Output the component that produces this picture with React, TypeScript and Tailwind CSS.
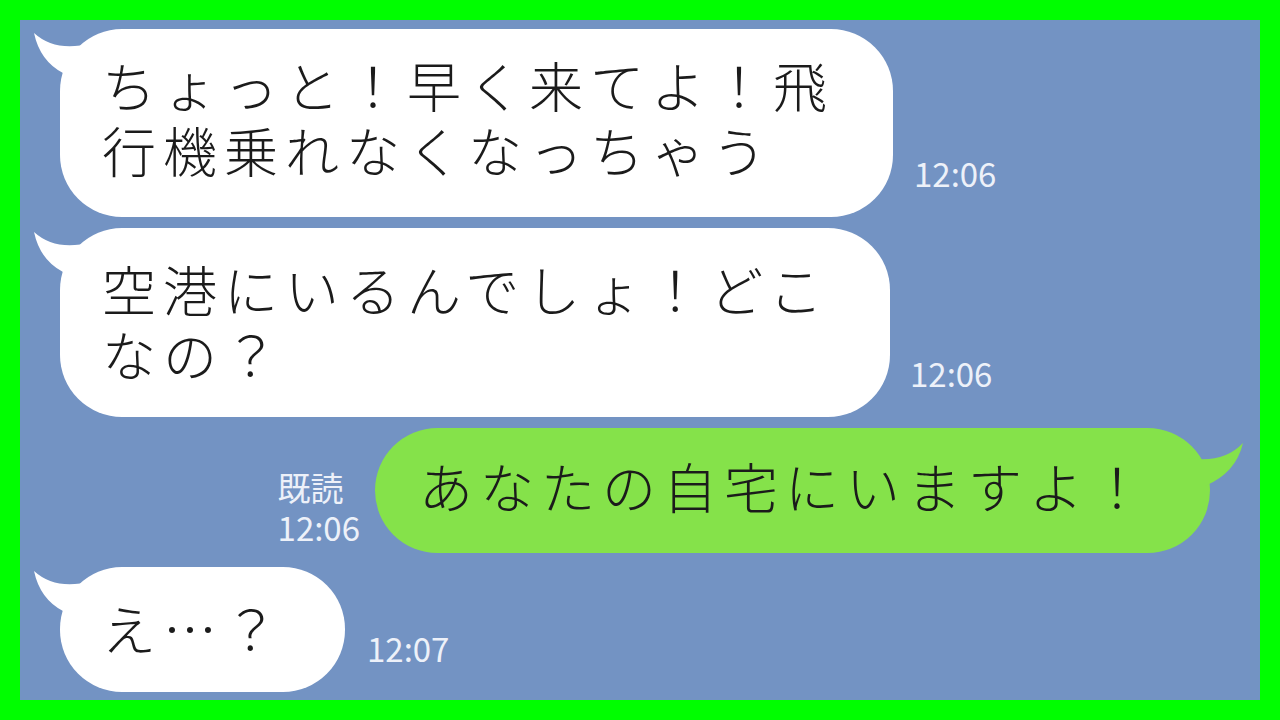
const font = "font-['Noto_Sans_CJK_JP','Noto_Sans',sans-serif]";

const LeftTail = () => (
  <svg
    className="absolute left-[-28px] top-0 h-[50px] w-[70px]"
    viewBox="-28 0 70 50"
    fill="#ffffff"
  >
    <path d="M -26 4 Q -4 24 32 14 L 32 50 L 3 50 L 3 44 Q -20 32 -26 4 Z" />
  </svg>
);

const RightTail = () => (
  <svg
    className="absolute right-[-38px] top-0 h-[70px] w-[80px]"
    viewBox="-40 0 80 70"
    fill="#85e24a"
  >
    <path d="M 35 15 Q 15 36 -20 30 L -20 70 L -3 70 L -3 58 Q 28 45 35 15 Z" />
  </svg>
);

type LeftMsgProps = {
  lines: string[];
  time: string;
  width: string;
  height: string;
  padTop: string;
  timeGap: string;
};

const LeftMsg = ({ lines, time, width, height, padTop, timeGap }: LeftMsgProps) => (
  <div className="flex items-end">
    <div
      className={`relative shrink-0 rounded-[62px] bg-white pl-[42px] text-[54px] font-light leading-[65px] tracking-[7px] text-[#1b1b1b] ${width} ${height} ${padTop}`}
    >
      <LeftTail />
      {lines.map((l) => (
        <div key={l} className="relative whitespace-nowrap">
          {l}
        </div>
      ))}
    </div>
    <span
      className={`mb-[27px] text-[33px] leading-none text-[#edf1f9] ${timeGap}`}
    >
      {time}
    </span>
  </div>
);

export default function App() {
  return (
    <div className={`h-[720px] w-[1280px] bg-[#00fe00] p-[20px] ${font}`}>
      <div className="flex h-full w-full flex-col bg-[#7393c3] pl-[40px] pr-[50px] pt-[9px]">
        <LeftMsg
          lines={["ちょっと！早く来てよ！飛", "行機乗れなくなっちゃう"]}
          time="12:06"
          width="w-[833px]"
          height="h-[188px]"
          padTop="pt-[23px]"
          timeGap="ml-[21px]"
        />
        <div className="mt-[11px]">
          <LeftMsg
            lines={["空港にいるんでしょ！どこ", "なの？"]}
            time="12:06"
            width="w-[830px]"
            height="h-[189px]"
            padTop="pt-[28px]"
            timeGap="ml-[20px]"
          />
        </div>
        <div className="mt-[11px] flex items-end justify-end">
          <div className="mb-[6px] mr-[15px] flex flex-col text-[33px] leading-[40px] text-[#edf1f9]">
            <span>既読</span>
            <span>12:06</span>
          </div>
          <div className="relative h-[125px] w-[835px] rounded-full bg-[#85e24a] pl-[44px] pt-[25px] text-[54px] font-light leading-[65px] tracking-[7px] text-[#1b1b1b]">
            <RightTail />
            <div className="relative whitespace-nowrap">あなたの自宅にいますよ！</div>
          </div>
        </div>
        <div className="mt-[14px]">
          <LeftMsg
            lines={["え…？"]}
            time="12:07"
            width="w-[285px]"
            height="h-[125px]"
            padTop="pt-[28px]"
            timeGap="ml-[22px]"
          />
        </div>
      </div>
    </div>
  );
}
